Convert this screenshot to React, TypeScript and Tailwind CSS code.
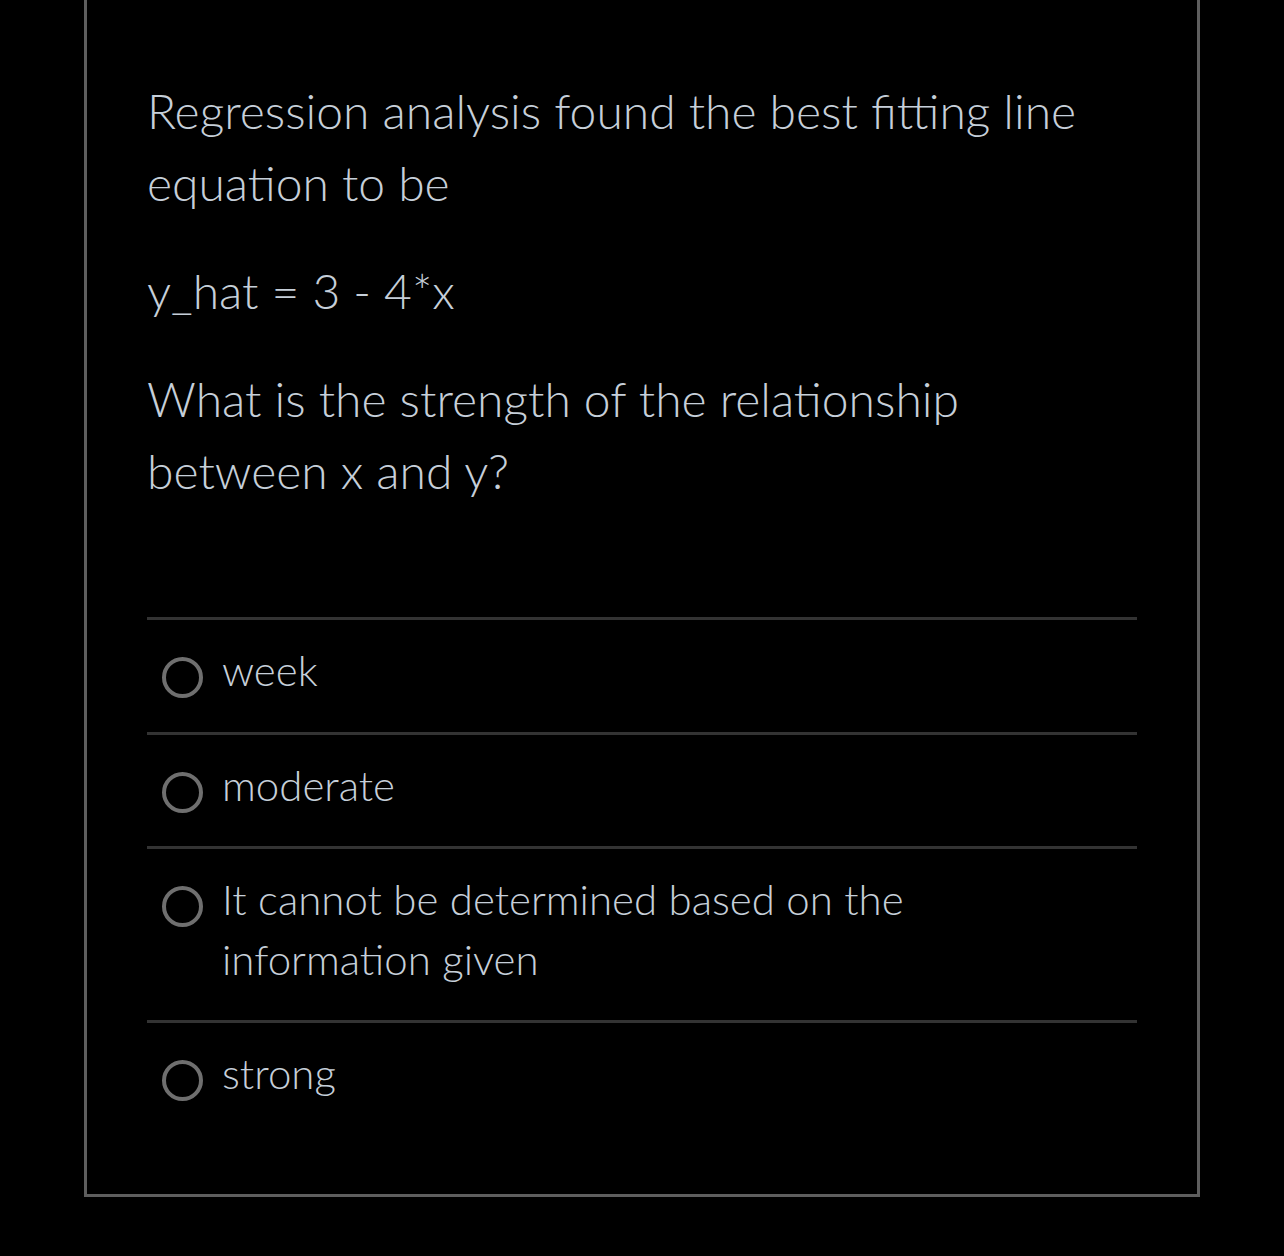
import React from "react";

const options = [
  "week",
  "moderate",
  "It cannot be determined based on the information given",
  "strong",
];

function Radio() {
  return (
    <span className="mt-[16px] ml-[15px] h-[41px] w-[41px] shrink-0 rounded-full border-[4px] border-[#6f6f6f]" />
  );
}

export default function App() {
  return (
    <div
      className="min-h-[1256px] w-full bg-black"
      style={{ fontFamily: "Lato, 'Open Sans', sans-serif" }}
    >
      <div className="ml-[84px] w-[1116px] border-x-[3px] border-b-[3px] border-[#5e5e5e] pl-[60px] pr-[60px] pt-[75px] pb-[59px]">
        <div className="text-[48px] leading-[72px] font-light text-[#c6cfd9]">
          <p className="mb-[36px] max-w-[960px]">
            Regression analysis found the best fitting line equation to be
          </p>
          <p className="mb-[36px]">y_hat = 3 - 4*x</p>
          <p className="max-w-[860px]">
            What is the strength of the relationship between x and y?
          </p>
        </div>

        <ul className="mt-[110px]">
          {options.map((opt) => (
            <li
              key={opt}
              className="flex items-start gap-[19px] pt-[21px] pb-[31px] border-t-[3px] border-[#333333]"
            >
              <Radio />
              <span className="max-w-[740px] text-[42px] leading-[59.5px] font-light text-[#c6cfd9]">
                {opt}
              </span>
            </li>
          ))}
        </ul>
      </div>
    </div>
  );
}
